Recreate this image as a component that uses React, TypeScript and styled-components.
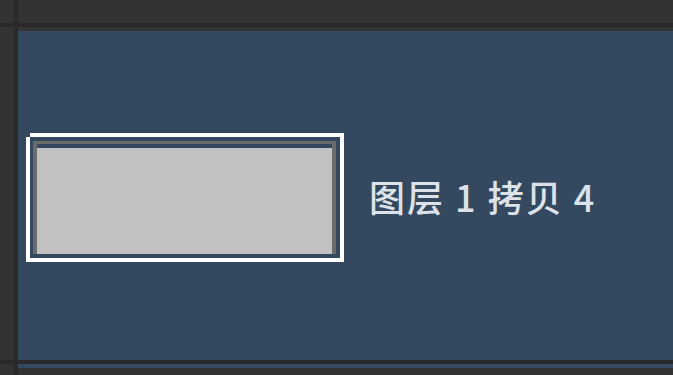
import React from "react";
import styled, { createGlobalStyle } from "styled-components";

const Global = createGlobalStyle`
  html, body { margin: 0; padding: 0; background: #323232; overflow: hidden; }
  #root { width: 673px; height: 375px; }
`;

const Page = styled.div`
  width: 673px;
  height: 375px;
  display: flex;
  flex-direction: column;
  background: #323232;
`;

const Row = styled.div<{ $h: number; $bg: string }>`
  height: ${(p) => p.$h}px;
  flex: none;
  display: flex;
  background: ${(p) => p.$bg};
`;

const HLine = styled.div<{ $h: number }>`
  height: ${(p) => p.$h}px;
  flex: none;
  background: #292929;
`;

const Gutter = styled.div<{ $bg?: string }>`
  width: 14px;
  flex: none;
  background: ${(p) => p.$bg || "#323232"};
`;

const VLine = styled.div`
  width: 4px;
  flex: none;
  background: #2a2a2a;
`;

const Content = styled.div<{ $bg: string }>`
  flex: 1;
  background: ${(p) => p.$bg};
  display: flex;
  align-items: center;
`;

const LayerContent = styled(Content)`
  padding: 4px 0 0 8px;
  gap: 25px;
`;

const Frame = styled.div`
  position: relative;
  width: 303px;
  height: 113px;
  border: 4px solid #ffffff;
  padding: 4px 4px 4px 3px;
  box-sizing: content-box;
  display: flex;
  flex: none;
  &::before {
    content: "";
    position: absolute;
    left: -4px;
    top: -4px;
    width: 4px;
    height: 4px;
    background: #34485f;
  }
`;

const Thumb = styled.div`
  flex: 1;
  box-sizing: border-box;
  border-left: 4px solid #6b6b6b;
  border-right: 4px solid #6b6b6b;
  border-top: 3px solid #6b6b6b;
  display: flex;
`;

const Fill = styled.div`
  flex: 1;
  background: #c1c1c1;
  border-top: 4px solid #34485f;
`;

const Name = styled.span`
  font-family: "Noto Sans CJK SC", "Noto Sans", sans-serif;
  font-size: 36px;
  font-weight: 500;
  line-height: 1;
  color: #dde2e8;
  white-space: nowrap;
  letter-spacing: 2px;
  margin-bottom: 4px;
`;

const BLUE = "#34485f";

export default function App() {
  return (
    <Page>
      <Global />
      <Row $h={23} $bg="#323232">
        <Gutter />
        <VLine />
        <Content $bg="#323232" />
      </Row>
      <HLine $h={4} />
      <Row $h={4} $bg="#333333">
        <Gutter $bg="#333333" />
        <VLine />
        <Content $bg="#333333" />
      </Row>
      <Row $h={329} $bg={BLUE}>
        <Gutter />
        <VLine />
        <LayerContent $bg={BLUE}>
          <Frame>
            <Thumb>
              <Fill />
            </Thumb>
          </Frame>
          <Name>图层 1 拷贝 4</Name>
        </LayerContent>
      </Row>
      <HLine $h={4} />
      <Row $h={4} $bg={BLUE}>
        <Gutter />
        <VLine />
        <Content $bg={BLUE} />
      </Row>
      <Row $h={7} $bg="#323232">
        <Gutter />
        <VLine />
        <Content $bg="#323232" />
      </Row>
    </Page>
  );
}
